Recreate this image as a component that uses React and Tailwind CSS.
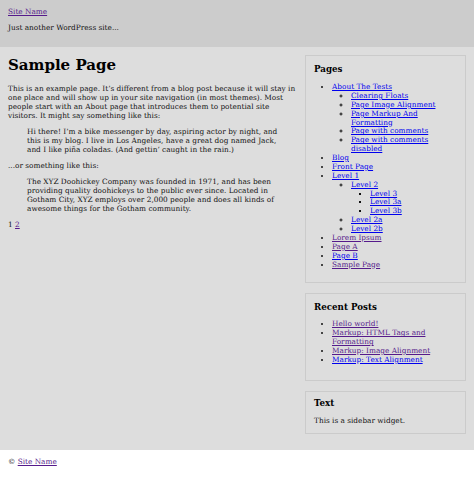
import React from "react";

const V = "text-[#551a8b] underline";
const B = "text-[#0000ee] underline";

function Li({ children, cls = "list-disc" }) {
  return <li className={cls}>{children}</li>;
}

export default function App() {
  return (
    <div className="bg-white text-[7.35px] leading-[8.88px] text-[#111]" style={{ fontFamily: '"DejaVu Serif", serif' }}>
      <header className="bg-[#cccccc] h-[47px] px-[8px] pt-[8px]">
        <div><a href="#" className={V}>Site Name</a></div>
        <div className="mt-[7px]">Just another WordPress site...</div>
      </header>
      <main className="bg-[#dddddd] flex gap-[8px] px-[8px] pt-[8px] pb-[16px]">
        <div className="flex-1 min-w-0">
          <h1 className="text-[15px] leading-[18px] font-bold text-black mt-[1px] mb-[11px]">Sample Page</h1>
          <p className="mb-[7.4px]">This is an example page. It’s different from a blog post because it will stay in one place and will show up in your site navigation (in most themes). Most people start with an About page that introduces them to potential site visitors. It might say something like this:</p>
          <blockquote className="mx-[19px] mb-[7.4px]">
            <p>Hi there! I’m a bike messenger by day, aspiring actor by night, and this is my blog. I live in Los Angeles, have a great dog named Jack, and I like piña coladas. (And gettin’ caught in the rain.)</p>
          </blockquote>
          <p className="mb-[7.4px]">...or something like this:</p>
          <blockquote className="mx-[19px] mb-[7.4px]">
            <p>The XYZ Doohickey Company was founded in 1971, and has been providing quality doohickeys to the public ever since. Located in Gotham City, XYZ employs over 2,000 people and does all kinds of awesome things for the Gotham community.</p>
          </blockquote>
          <p>1 <a href="#" className={V}>2</a></p>
        </div>
        <aside className="w-[161px] shrink-0 flex flex-col gap-[10px]">
          <section className="border border-[#cbcbcb] px-[8px] pt-[8px] pb-[13px]">
            <h3 className="text-[8.7px] leading-[10px] font-bold text-black mb-[9px]">Pages</h3>
            <ul className="pl-[18px]">
              <Li><a href="#" className={B}>About The Tests</a>
                <ul className="pl-[19px]">
                  <Li cls="list-[circle]"><a href="#" className={B}>Clearing Floats</a></Li>
                  <Li cls="list-[circle]"><a href="#" className={B}>Page Image Alignment</a></Li>
                  <Li cls="list-[circle]"><a href="#" className={B}>Page Markup And Formatting</a></Li>
                  <Li cls="list-[circle]"><a href="#" className={B}>Page with comments</a></Li>
                  <Li cls="list-[circle]"><a href="#" className={B}>Page with comments disabled</a></Li>
                </ul>
              </Li>
              <Li><a href="#" className={B}>Blog</a></Li>
              <Li><a href="#" className={B}>Front Page</a></Li>
              <Li><a href="#" className={B}>Level 1</a>
                <ul className="pl-[19px]">
                  <Li cls="list-[circle]"><a href="#" className={B}>Level 2</a>
                    <ul className="pl-[19px]">
                      <Li cls="list-[square]"><a href="#" className={B}>Level 3</a></Li>
                      <Li cls="list-[square]"><a href="#" className={B}>Level 3a</a></Li>
                      <Li cls="list-[square]"><a href="#" className={B}>Level 3b</a></Li>
                    </ul>
                  </Li>
                  <Li cls="list-[circle]"><a href="#" className={B}>Level 2a</a></Li>
                  <Li cls="list-[circle]"><a href="#" className={B}>Level 2b</a></Li>
                </ul>
              </Li>
              <Li><a href="#" className={V}>Lorem Ipsum</a></Li>
              <Li><a href="#" className={V}>Page A</a></Li>
              <Li><a href="#" className={B}>Page B</a></Li>
              <Li><a href="#" className={V}>Sample Page</a></Li>
            </ul>
          </section>
          <section className="border border-[#cbcbcb] px-[8px] pt-[8px] pb-[15px]">
            <h3 className="text-[8.7px] leading-[10px] font-bold text-black mb-[8px]">Recent Posts</h3>
            <ul className="pl-[18px]">
              <Li><a href="#" className={V}>Hello world!</a></Li>
              <Li><a href="#" className={V}>Markup: HTML Tags and Formatting</a></Li>
              <Li><a href="#" className={V}>Markup: Image Alignment</a></Li>
              <Li><a href="#" className={B}>Markup: Text Alignment</a></Li>
            </ul>
          </section>
          <section className="border border-[#cbcbcb] px-[8px] pt-[6px] pb-[7px]">
            <h3 className="text-[8.7px] leading-[10px] font-bold text-black mb-[9.6px]">Text</h3>
            <p>This is a sidebar widget.</p>
          </section>
        </aside>
      </main>
      <footer className="px-[8px] pt-[8px] pb-[20px]">
        © <a href="#" className={V}>Site Name</a>
      </footer>
    </div>
  );
}
